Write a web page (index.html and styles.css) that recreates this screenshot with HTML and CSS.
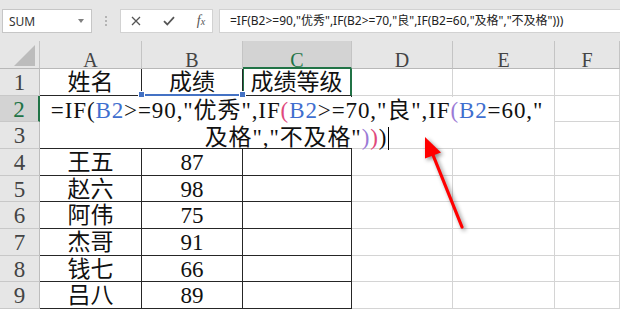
FILE: index.html
```html
<!DOCTYPE html>
<html lang="zh-CN">
<head>
    <meta charset="UTF-8">
    <title>IF 函数 - 成绩等级</title>
    <link rel="stylesheet" href="styles.css">
</head>
<body>
    <!-- 编辑栏 -->
    <div class="toolbar">
        <div class="namebox">SUM<span class="caret"></span></div>
        <div class="grip"><span></span></div>
        <div class="fbtns">
            <span class="btn">
                <svg width="10" height="10" viewBox="0 0 10 10"><path d="M1 1L9 9M9 1L1 9" stroke="#555" stroke-width="1.3" fill="none"/></svg>
            </span>
            <span class="btn">
                <svg width="12" height="10" viewBox="0 0 12 10"><path d="M1 5.2L4.3 8.5L11 1.2" stroke="#555" stroke-width="1.8" fill="none"/></svg>
            </span>
            <span class="btn fx">f<small>x</small></span>
        </div>
        <div class="fbox">=IF(B2&gt;=90,"优秀",IF(B2&gt;=70,"良",IF(B2=60,"及格","不及格")))</div>
    </div>

    <!-- 工作表 -->
    <div class="sheet">
        <div class="corner"><span class="tri"></span></div>
        <div class="hd">A</div>
        <div class="hd">B</div>
        <div class="hd sel">C</div>
        <div class="hd">D</div>
        <div class="hd">E</div>
        <div class="hd">F</div>

        <div class="rh">1</div>
        <div class="c t">姓名</div>
        <div class="c t ref">成绩</div>
        <div class="c t act">成绩等级</div>
        <div class="c"></div><div class="c"></div><div class="c"></div>

        <div class="rh sel">2</div>
        <div class="c t"></div><div class="c t"></div><div class="c t"></div>
        <div class="c"></div><div class="c"></div><div class="c"></div>

        <div class="rh">3</div>
        <div class="c t"></div><div class="c t"></div><div class="c t"></div>
        <div class="c"></div><div class="c"></div><div class="c"></div>

        <div class="rh">4</div>
        <div class="c t">王五</div><div class="c t">87</div><div class="c t"></div>
        <div class="c"></div><div class="c"></div><div class="c"></div>

        <div class="rh">5</div>
        <div class="c t">赵六</div><div class="c t">98</div><div class="c t"></div>
        <div class="c"></div><div class="c"></div><div class="c"></div>

        <div class="rh">6</div>
        <div class="c t">阿伟</div><div class="c t">75</div><div class="c t"></div>
        <div class="c"></div><div class="c"></div><div class="c"></div>

        <div class="rh">7</div>
        <div class="c t">杰哥</div><div class="c t">91</div><div class="c t"></div>
        <div class="c"></div><div class="c"></div><div class="c"></div>

        <div class="rh">8</div>
        <div class="c t">钱七</div><div class="c t">66</div><div class="c t"></div>
        <div class="c"></div><div class="c"></div><div class="c"></div>

        <div class="rh">9</div>
        <div class="c t">吕八</div><div class="c t">89</div><div class="c t"></div>
        <div class="c"></div><div class="c"></div><div class="c"></div>

        <!-- C2 单元格内编辑 -->
        <div class="edit">=IF(<span class="r">B2</span>&gt;=90,"优秀",IF<span class="p2">(</span><span class="r">B2</span>&gt;=70,"良",IF<span class="p3">(</span><span class="r">B2</span>=60,"<br>及格","不及格"<span class="p3">)</span><span class="p2">)</span>)<span class="cursor"></span></div>
    </div>

    <!-- 红色箭头 -->
    <svg class="arrow" width="620" height="309" viewBox="0 0 620 309">
        <g class="shadow">
            <path d="M462 227L433 155" stroke="#f00" stroke-width="3.2" stroke-linecap="round" fill="none"/>
            <path d="M425 137L441 152.5L425 158.5Z" fill="#f00"/>
        </g>
    </svg>
</body>
</html>
```

FILE: styles.css
```css
body {
    margin: 0;
    width: 620px;
    height: 309px;
    overflow: hidden;
    position: relative;
    background: #fff;
    font-family: "Liberation Serif", "Noto Sans CJK SC", serif;
}

/* 编辑栏 */
.toolbar {
    height: 41px;
    box-sizing: border-box;
    padding-top: 9px;
    background: #e6e6e6;
    display: flex;
    align-items: flex-start;
}
.namebox {
    margin-left: 2px;
    width: 90px;
    height: 24px;
    box-sizing: border-box;
    padding: 0 7px 0 6px;
    background: #fff;
    border: 1px solid #c6c6c6;
    display: flex;
    align-items: center;
    font: 12px "Noto Sans", sans-serif;
    color: #333;
}
.caret {
    margin-left: auto;
    border-left: 3.5px solid transparent;
    border-right: 3.5px solid transparent;
    border-top: 4px solid #808080;
}
.grip {
    width: 28px;
    height: 24px;
    display: flex;
    align-items: center;
    justify-content: center;
}
.grip span {
    height: 10px;
    border-left: 2px dotted #b4b4b4;
}
.fbtns {
    width: 93px;
    height: 24px;
    box-sizing: border-box;
    padding-left: 5px;
    background: #fff;
    border: 1px solid #d2d2d2;
    display: flex;
    align-items: center;
    gap: 12.5px;
}
.btn {
    width: 20px;
    display: flex;
    justify-content: center;
    align-items: center;
}
.fx {
    font: italic 14px "Liberation Serif", serif;
    color: #555;
}
.fx small {
    font-size: 10px;
}
.fbox {
    margin-left: 6px;
    flex: 1;
    height: 24px;
    box-sizing: border-box;
    padding-left: 10px;
    background: #fff;
    border: 1px solid #d2d2d2;
    border-right: none;
    font: 12px "Noto Sans", "Noto Sans CJK SC", sans-serif;
    line-height: 22px;
    color: #222;
    white-space: nowrap;
    overflow: hidden;
}

/* 工作表 */
.sheet {
    position: relative;
    display: grid;
    grid-template-columns: 40px 102px 101px 109px 101px 102px 65px;
    grid-template-rows: 28px repeat(9, 26.67px);
}
.sheet > div {
    box-sizing: border-box;
}
.corner {
    background: #e6e6e6;
    border-right: 1px solid #c4c4c4;
    border-bottom: 1px solid #b8b8b8;
    display: flex;
    justify-content: flex-end;
    align-items: flex-end;
    padding: 0 4px 2px 0;
}
.tri {
    border-left: 21px solid transparent;
    border-bottom: 21px solid #bcbcbc;
}
.hd {
    background: #e6e6e6;
    border-right: 1px solid #c4c4c4;
    border-bottom: 1px solid #b8b8b8;
    text-align: center;
    font-size: 20px;
    line-height: 18px;
    padding-top: 10px;
    color: #444;
}
.hd.sel {
    background: #d3d3d3;
    color: #217346;
    border-bottom: 2px solid #217346;
}
.rh {
    background: #e6e6e6;
    border-right: 1px solid #bdbdbd;
    border-bottom: 1px solid #c8c8c8;
    text-align: center;
    font-size: 23px;
    line-height: 26px;
    padding-top: 1px;
    color: #444;
}
.rh.sel {
    background: #d3d3d3;
    color: #217346;
    border-right: 2px solid #217346;
}
.c {
    border-right: 1px solid #d4d4d4;
    border-bottom: 1px solid #d4d4d4;
    text-align: center;
    font-size: 23px;
    line-height: 24px;
    padding-top: 2px;
    color: #111;
    white-space: nowrap;
}
.c.t {
    border-right-color: #262626;
    border-bottom-color: #262626;
}
.c.ref {
    position: relative;
    border-bottom: 2px solid #4472c4;
}
.c.ref::before,
.c.ref::after {
    content: "";
    position: absolute;
    bottom: -4px;
    width: 5px;
    height: 5px;
    background: #4472c4;
    border: 1px solid #fff;
}
.c.ref::before {
    left: -4px;
}
.c.ref::after {
    right: -4px;
}
.c.act {
    border-right: 2px solid #217346;
    box-shadow: inset 1px 0 0 #217346;
}

/* 单元格编辑框 */
.edit {
    position: absolute;
    left: 40px;
    top: 56px;
    width: 514px;
    height: 51px;
    background: #fff;
    text-align: center;
    font-size: 23px;
    line-height: 27px;
    letter-spacing: 0.9px;
    white-space: nowrap;
    color: #111;
}
.edit .r {
    color: #3f6fcf;
}
.edit .p2 {
    color: #e0487c;
}
.edit .p3 {
    color: #9b7ad6;
}
.cursor {
    display: inline-block;
    width: 0;
    height: 23px;
    margin-left: 1px;
    border-left: 1.5px solid #000;
    vertical-align: -5px;
}

/* 箭头 */
.arrow {
    position: absolute;
    left: 0;
    top: 0;
    pointer-events: none;
}
.arrow .shadow {
    filter: drop-shadow(2px 2px 2px rgba(0, 0, 0, 0.45));
}
```
